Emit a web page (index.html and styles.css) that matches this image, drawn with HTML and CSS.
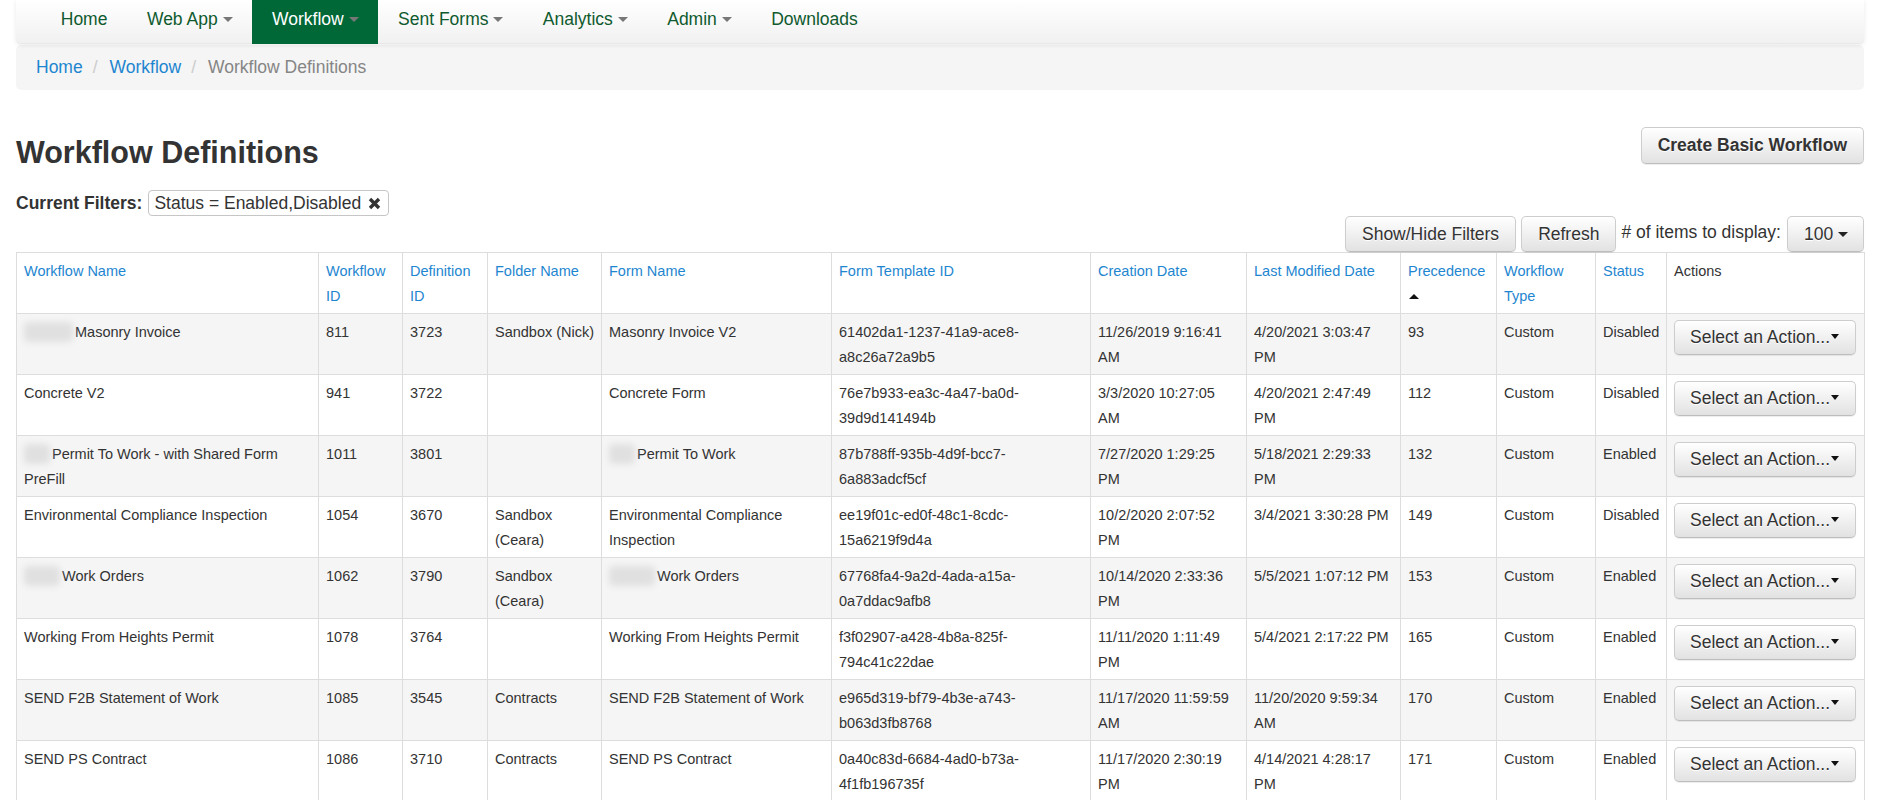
FILE: index.html
```html
<!DOCTYPE html>
<html lang="en">
<head>
<meta charset="utf-8">
<title>Workflow Definitions</title>
<link rel="stylesheet" href="styles.css">
</head>
<body>
<div class="page">
  <nav class="navbar">
    <a class="nav-link" href="#">Home</a>
    <a class="nav-link" href="#">Web App <span class="caret"></span></a>
    <a class="nav-link active" href="#">Workflow <span class="caret"></span></a>
    <a class="nav-link" href="#">Sent Forms <span class="caret"></span></a>
    <a class="nav-link" href="#">Analytics <span class="caret"></span></a>
    <a class="nav-link" href="#">Admin <span class="caret"></span></a>
    <a class="nav-link" href="#">Downloads</a>
  </nav>

  <div class="breadcrumb">
    <a href="#">Home</a><span class="sep">/</span><a href="#">Workflow</a><span class="sep">/</span><span class="current">Workflow Definitions</span>
  </div>

  <div class="page-head">
    <h2>Workflow Definitions</h2>
    <button class="btn btn-bold">Create Basic Workflow</button>
  </div>

  <div class="filters">
    <strong>Current Filters:</strong>
    <span class="tag">Status = Enabled,Disabled
      <svg class="tag-x" width="13" height="13" viewBox="0 0 13 13"><path d="M2 2 L11 11 M11 2 L2 11" stroke="#333" stroke-width="3.4" fill="none"/></svg>
    </span>
  </div>

  <div class="toolbar">
    <button class="btn">Show/Hide Filters</button>
    <button class="btn">Refresh</button>
    <span class="label">#&nbsp;of items to display:</span>
    <button class="btn btn-num">100 <span class="caret dark"></span></button>
  </div>

  <table class="grid">
    <colgroup>
      <col class="c-name"><col class="c-wid"><col class="c-did"><col class="c-folder"><col class="c-form"><col class="c-tpl"><col class="c-created"><col class="c-mod"><col class="c-prec"><col class="c-type"><col class="c-status"><col class="c-actions">
    </colgroup>
    <thead>
      <tr>
        <th><a href="#">Workflow Name</a></th>
        <th><a href="#">Workflow ID</a></th>
        <th><a href="#">Definition ID</a></th>
        <th><a href="#">Folder Name</a></th>
        <th><a href="#">Form Name</a></th>
        <th><a href="#">Form Template ID</a></th>
        <th><a href="#">Creation Date</a></th>
        <th><a href="#">Last Modified Date</a></th>
        <th><a href="#">Precedence</a><span class="sort"><span class="sort-up"></span></span></th>
        <th><a href="#">Workflow Type</a></th>
        <th><a href="#">Status</a></th>
        <th>Actions</th>
      </tr>
    </thead>
    <tbody>
      <tr>
        <td><span class="blur blur-a"></span>Masonry Invoice</td>
        <td>811</td><td>3723</td><td>Sandbox (Nick)</td><td>Masonry Invoice V2</td>
        <td>61402da1-1237-41a9-ace8-a8c26a72a9b5</td>
        <td class="date">11/26/2019 9:16:41 AM</td><td>4/20/2021 3:03:47 PM</td>
        <td>93</td><td>Custom</td><td>Disabled</td>
        <td><button class="btn btn-action">Select an Action...<span class="caret action"></span></button></td>
      </tr>
      <tr>
        <td>Concrete V2</td>
        <td>941</td><td>3722</td><td></td><td>Concrete Form</td>
        <td>76e7b933-ea3c-4a47-ba0d-39d9d141494b</td>
        <td class="date">3/3/2020 10:27:05 AM</td><td>4/20/2021 2:47:49 PM</td>
        <td>112</td><td>Custom</td><td>Disabled</td>
        <td><button class="btn btn-action">Select an Action...<span class="caret action"></span></button></td>
      </tr>
      <tr>
        <td><span class="blur blur-b"></span>Permit To Work - with Shared Form PreFill</td>
        <td>1011</td><td>3801</td><td></td><td><span class="blur blur-c"></span>Permit To Work</td>
        <td>87b788ff-935b-4d9f-bcc7-6a883adcf5cf</td>
        <td class="date">7/27/2020 1:29:25 PM</td><td>5/18/2021 2:29:33 PM</td>
        <td>132</td><td>Custom</td><td>Enabled</td>
        <td><button class="btn btn-action">Select an Action...<span class="caret action"></span></button></td>
      </tr>
      <tr>
        <td>Environmental Compliance Inspection</td>
        <td>1054</td><td>3670</td><td>Sandbox (Ceara)</td><td>Environmental Compliance Inspection</td>
        <td>ee19f01c-ed0f-48c1-8cdc-15a6219f9d4a</td>
        <td class="date">10/2/2020 2:07:52 PM</td><td>3/4/2021 3:30:28 PM</td>
        <td>149</td><td>Custom</td><td>Disabled</td>
        <td><button class="btn btn-action">Select an Action...<span class="caret action"></span></button></td>
      </tr>
      <tr>
        <td><span class="blur blur-d"></span>Work Orders</td>
        <td>1062</td><td>3790</td><td>Sandbox (Ceara)</td><td><span class="blur blur-e"></span>Work Orders</td>
        <td>67768fa4-9a2d-4ada-a15a-0a7ddac9afb8</td>
        <td class="date">10/14/2020 2:33:36 PM</td><td>5/5/2021 1:07:12 PM</td>
        <td>153</td><td>Custom</td><td>Enabled</td>
        <td><button class="btn btn-action">Select an Action...<span class="caret action"></span></button></td>
      </tr>
      <tr>
        <td>Working From Heights Permit</td>
        <td>1078</td><td>3764</td><td></td><td>Working From Heights Permit</td>
        <td>f3f02907-a428-4b8a-825f-794c41c22dae</td>
        <td class="date">11/11/2020 1:11:49 PM</td><td>5/4/2021 2:17:22 PM</td>
        <td>165</td><td>Custom</td><td>Enabled</td>
        <td><button class="btn btn-action">Select an Action...<span class="caret action"></span></button></td>
      </tr>
      <tr>
        <td>SEND F2B Statement of Work</td>
        <td>1085</td><td>3545</td><td>Contracts</td><td>SEND F2B Statement of Work</td>
        <td>e965d319-bf79-4b3e-a743-b063d3fb8768</td>
        <td class="date">11/17/2020 11:59:59 AM</td><td>11/20/2020 9:59:34 AM</td>
        <td>170</td><td>Custom</td><td>Enabled</td>
        <td><button class="btn btn-action">Select an Action...<span class="caret action"></span></button></td>
      </tr>
      <tr>
        <td>SEND PS Contract</td>
        <td>1086</td><td>3710</td><td>Contracts</td><td>SEND PS Contract</td>
        <td>0a40c83d-6684-4ad0-b73a-4f1fb196735f</td>
        <td class="date">11/17/2020 2:30:19 PM</td><td>4/14/2021 4:28:17 PM</td>
        <td>171</td><td>Custom</td><td>Enabled</td>
        <td><button class="btn btn-action">Select an Action...<span class="caret action"></span></button></td>
      </tr>
    </tbody>
  </table>
</div>
</body>
</html>
```
FILE: styles.css
```css
* { box-sizing: border-box; }

html, body {
  margin: 0;
  padding: 0;
  background: #fff;
}

body {
  font-family: "Liberation Sans", Arial, Helvetica, sans-serif;
  font-size: 17.5px;
  line-height: 25px;
  color: #333;
}

a { text-decoration: none; }

.page {
  width: 1848px;
  margin-left: 16px;
}

/* ---------- navbar ---------- */
.navbar {
  display: flex;
  height: 44px;
  padding-left: 25px;
  background: linear-gradient(to bottom, #ffffff 0%, #f1f1f1 100%);
  border-bottom: 1px solid #e8e8e8;
  border-radius: 0 0 5px 5px;
  box-shadow: 0 1px 5px rgba(0, 0, 0, 0.09);
  position: relative;
  z-index: 1;
}

.nav-link {
  display: block;
  height: 43px;
  padding: 7px 19.75px 0;
  color: #0f5a2e;
  white-space: nowrap;
}

.nav-link.active {
  background: #006837;
  color: #fff;
  height: 44px;
}

.caret {
  display: inline-block;
  width: 0;
  height: 0;
  vertical-align: 3px;
  border-top: 5px solid #777;
  border-left: 5px solid transparent;
  border-right: 5px solid transparent;
}

.caret.dark { border-top-color: #222; }

.caret.action {
  border-top: 5px solid #111;
  border-left: 4px solid transparent;
  border-right: 4px solid transparent;
  vertical-align: 4px;
  margin-left: 1px;
}

/* ---------- breadcrumb ---------- */
.breadcrumb {
  display: flex;
  margin-top: 1px;
  height: 45px;
  padding: 10px 20px;
  background: #f5f5f5;
  border-radius: 5px;
}

.breadcrumb a { color: #1e86d0; }
.breadcrumb .sep { color: #ccc; margin: 0 12px 0 10px; }
.breadcrumb .current { color: #858585; }

/* ---------- heading ---------- */
.page-head {
  display: flex;
  justify-content: space-between;
  align-items: flex-start;
  margin-top: 37px;
}

.page-head h2 {
  margin: 9px 0 0;
  font-size: 30.5px;
  line-height: 33px;
  font-weight: bold;
  color: #333;
}

/* ---------- buttons ---------- */
.btn {
  display: inline-block;
  height: 36px;
  padding: 0 16px;
  font-family: inherit;
  font-size: 17.5px;
  line-height: 34px;
  color: #333;
  background: linear-gradient(to bottom, #ffffff 0%, #e2e2e2 100%);
  border: 1px solid #cdcdcd;
  border-bottom-color: #bdbdbd;
  border-radius: 5px;
  box-shadow: inset 0 1px 0 rgba(255, 255, 255, 0.15), 0 1px 1px rgba(0, 0, 0, 0.075);
  text-shadow: 0 1px 0 #fff;
  white-space: nowrap;
  cursor: pointer;
}

.btn-bold {
  height: 37px;
  line-height: 35px;
  font-weight: bold;
}

.btn-num { padding: 0 15px 0 16px; }

.btn-action {
  height: 35px;
  line-height: 33px;
  padding: 0 16px 0 15px;
}

/* ---------- filters ---------- */
.filters {
  display: flex;
  align-items: center;
  height: 26px;
  margin-top: 21px;
}

.tag {
  display: inline-flex;
  align-items: center;
  height: 26px;
  margin-left: 6px;
  padding: 0 7px 0 5px;
  border: 1px solid #c6c6c6;
  border-radius: 4px;
  background: #fff;
  line-height: 24px;
}

.tag-x { margin-left: 7px; }

/* ---------- toolbar ---------- */
.toolbar {
  display: flex;
  justify-content: flex-end;
  align-items: center;
  gap: 5px;
  height: 36px;
}

.toolbar .label { margin: -3px 1px 0 0; }

/* ---------- table ---------- */
.grid {
  width: 1848px;
  table-layout: fixed;
  border-collapse: collapse;
  font-size: 14.5px;
  line-height: 25px;
  color: #333;
}

.c-name { width: 302px; }
.c-wid { width: 84px; }
.c-did { width: 85px; }
.c-folder { width: 114px; }
.c-form { width: 230px; }
.c-tpl { width: 259px; }
.c-created { width: 156px; }
.c-mod { width: 154px; }
.c-prec { width: 96px; }
.c-type { width: 99px; }
.c-status { width: 71px; }
.c-actions { width: 198px; }

.grid th,
.grid td {
  border: 1px solid #ddd;
  padding: 6px 6px 4px 7px;
  vertical-align: top;
  text-align: left;
  font-weight: normal;
}

.grid td.date { padding-right: 10px; }

.grid th a { color: #1e86d0; }

.grid tbody tr:nth-child(odd) { background: #f5f5f5; }

.sort {
  display: flex;
  align-items: center;
  height: 25px;
  padding-left: 1px;
}

.sort-up {
  width: 0;
  height: 0;
  border-bottom: 5px solid #111;
  border-left: 5px solid transparent;
  border-right: 5px solid transparent;
}

.blur {
  display: inline-block;
  height: 20px;
  margin-right: 2px;
  vertical-align: -5px;
  background: #e0e0e0;
  border-radius: 5px;
  filter: blur(3px);
}

.blur-a { width: 49px; }
.blur-b { width: 26px; }
.blur-c { width: 26px; }
.blur-d { width: 36px; }
.blur-e { width: 46px; }
```
